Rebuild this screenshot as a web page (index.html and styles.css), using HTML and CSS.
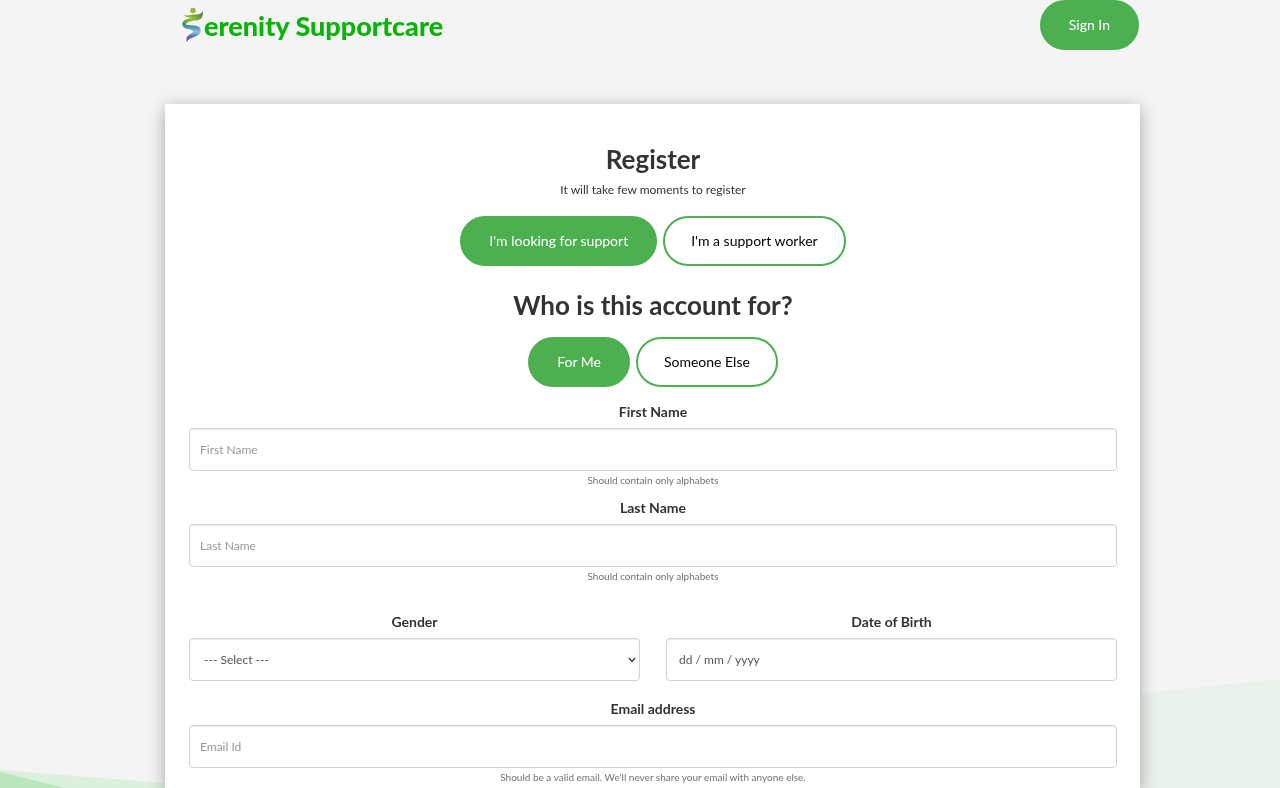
FILE: index.html
```html
<!DOCTYPE html>
<html lang="en">
<head>
<meta charset="utf-8">
<meta name="viewport" content="width=device-width, initial-scale=1">
<title>Serenity Supportcare – Register</title>
<link rel="stylesheet" href="styles.css">
</head>
<body>
<svg class="backdrop" viewBox="0 0 1280 110" preserveAspectRatio="none" aria-hidden="true">
  <path d="M0 92 L165 105 L230 110 H0Z" fill="#dcf0de"/>
  <path d="M0 94 L65 110 H0Z" fill="#bce5bd"/>
  <path d="M970 32 L1280 1 V110 H970Z" fill="#e9f1ea"/>
</svg>
<div class="page">
  <header class="header">
    <a class="brand" href="#" aria-label="Serenity Supportcare">
      <svg class="brand-mark" width="22" height="36" viewBox="0 0 22 36" aria-hidden="true">
        <defs>
          <linearGradient id="top" x1="0" y1="1" x2="1" y2="0">
            <stop offset="0" stop-color="#3f8f56"/>
            <stop offset=".5" stop-color="#97bd3c"/>
            <stop offset="1" stop-color="#2f6e2c"/>
          </linearGradient>
          <linearGradient id="tail" x1="0" y1="0" x2="0" y2="1">
            <stop offset="0" stop-color="#38844e"/>
            <stop offset=".25" stop-color="#4d93a8"/>
            <stop offset=".5" stop-color="#8fc4e4"/>
            <stop offset=".75" stop-color="#5663a8"/>
            <stop offset="1" stop-color="#99508f"/>
          </linearGradient>
        </defs>
        <circle cx="11" cy="3.5" r="2.8" fill="#91b846"/>
        <path d="M21 4 C21 11 19 13 14 13.500 C8 14 3 15 3 20 C0 19 0 15 2 13.500 C4 12 7 12 10 11 C7 11 3 10 2 8 C6 9 8 7.500 12 7.500 C17 8 19 7 21 4Z" fill="url(#top)"/>
        <path d="M1 15 C2 18 6 18 12 18.500 C18 19 20 22 18 26 C16 30 7 30 5 35 C3 31 6 28 9 26.500 C12 25 12 23.500 8 22.500 C3 21.500 -1 20 1 15Z" fill="url(#tail)"/>
      </svg>
      <span class="brand-name">erenity Supportcare</span>
    </a>
    <a class="btn btn-solid" href="#">Sign In</a>
  </header>
  <main class="card">
    <h1 class="title">Register</h1>
    <p class="subtitle">It will take few moments to register</p>
    <div class="choices">
      <button type="button" class="btn btn-solid">I'm looking for support</button>
      <button type="button" class="btn btn-outline">I'm a support worker</button>
    </div>
    <h2 class="title title-second">Who is this account for?</h2>
    <div class="choices choices-second">
      <button type="button" class="btn btn-solid">For Me</button>
      <button type="button" class="btn btn-outline">Someone Else</button>
    </div>
    <form class="form">
      <div class="field">
        <label for="first">First Name</label>
        <input class="control" id="first" type="text" placeholder="First Name">
        <small class="hint">Should contain only alphabets</small>
      </div>
      <div class="field">
        <label for="last">Last Name</label>
        <input class="control" id="last" type="text" placeholder="Last Name">
        <small class="hint">Should contain only alphabets</small>
      </div>
      <div class="row">
        <div class="field">
          <label for="gender">Gender</label>
          <div class="select-wrap">
            <select class="control control-select" id="gender">
              <option>--- Select ---</option>
              <option>Male</option>
              <option>Female</option>
            </select>
            <svg class="chevron" width="8" height="6" viewBox="0 0 8 6" aria-hidden="true">
              <path d="M1 1 L4 4.500 L7 1" fill="none" stroke="#333" stroke-width="1.300"/>
            </svg>
          </div>
        </div>
        <div class="field">
          <label for="dob">Date of Birth</label>
          <input class="control control-date" id="dob" type="text" placeholder="dd / mm / yyyy">
        </div>
      </div>
      <div class="field">
        <label for="email">Email address</label>
        <input class="control" id="email" type="email" placeholder="Email Id">
        <small class="hint">Should be a valid email. We'll never share your email with anyone else.</small>
      </div>
    </form>
  </main>
</div>
</body>
</html>
```

FILE: styles.css
```css
* {
  box-sizing: border-box;
}

body {
  margin: 0;
  background: #f4f4f4;
  color: #333;
  font-family: Lato, "Liberation Sans", sans-serif;
  font-size: 14px;
}

.backdrop {
  position: fixed;
  left: 0;
  bottom: 0;
  width: 100%;
  height: 110px;
}

.page {
  position: relative;
  display: flex;
  flex-direction: column;
  min-height: 100vh;
  padding: 0 140px 0 165px;
}

.header {
  display: flex;
  justify-content: space-between;
  align-items: center;
  margin-bottom: 54px;
  padding: 0 1px 0 17px;
}

.brand {
  display: flex;
  align-items: center;
  color: #0ab30a;
  text-decoration: none;
}

.brand-name {
  padding-top: 2px;
  font-size: 27px;
  font-weight: 900;
  line-height: 36px;
}

.btn {
  height: 50px;
  border: 2px solid #4caf50;
  border-radius: 25px;
  font: 14px/46px Lato, "Liberation Sans", sans-serif;
  text-decoration: none;
  cursor: pointer;
}

.btn-solid {
  padding: 0 27px;
  background: #4caf50;
  color: #fff;
}

.btn-outline {
  padding: 0 26px;
  background: #fff;
  color: #000;
}

.card {
  flex: 1;
  padding: 39px 23px 0 24px;
  background: #fff;
  box-shadow: 0 4px 16px rgba(0, 0, 0, .32);
  text-align: center;
}

.title {
  margin: 0;
  font-size: 26px;
  font-weight: 700;
  line-height: 34px;
}

.title-second {
  margin-top: 22px;
}

.subtitle {
  margin: 4px 0 16px;
  font-size: 12px;
  line-height: 20px;
}

.choices {
  display: flex;
  flex-wrap: wrap;
  justify-content: center;
  gap: 6px;
}

.choices-second {
  margin: 15px 0 15px;
}

.form {
  display: flex;
  flex-direction: column;
  gap: 8px;
}

.row {
  display: grid;
  grid-template-columns: 1fr 1fr;
  gap: 26px;
  margin: 18px 0 10px;
}

.field {
  display: flex;
  flex-direction: column;
}

.field label {
  margin-bottom: 6px;
  font-weight: 700;
  line-height: 20px;
}

.control {
  width: 100%;
  height: 43px;
  padding: 0 10px;
  border: 1px solid #d2d2d2;
  border-radius: 4px;
  background: #fff;
  box-shadow: inset 0 1px 1px rgba(0, 0, 0, .08);
  color: #555;
  font: 12px Lato, "Liberation Sans", sans-serif;
}

.control::placeholder {
  color: #999;
}

.select-wrap {
  position: relative;
  display: flex;
}

.control-select {
  padding: 0 24px 0 14px;
  appearance: none;
}

.chevron {
  position: absolute;
  top: 19px;
  right: 4px;
  pointer-events: none;
}

.control-date {
  padding: 0 12px;
}

.control-date::placeholder {
  color: #555;
}

.hint {
  margin-bottom: 1px;
  color: #737373;
  font-size: 10px;
  line-height: 18px;
}

.card {
  padding-top: 38px;
}
```
